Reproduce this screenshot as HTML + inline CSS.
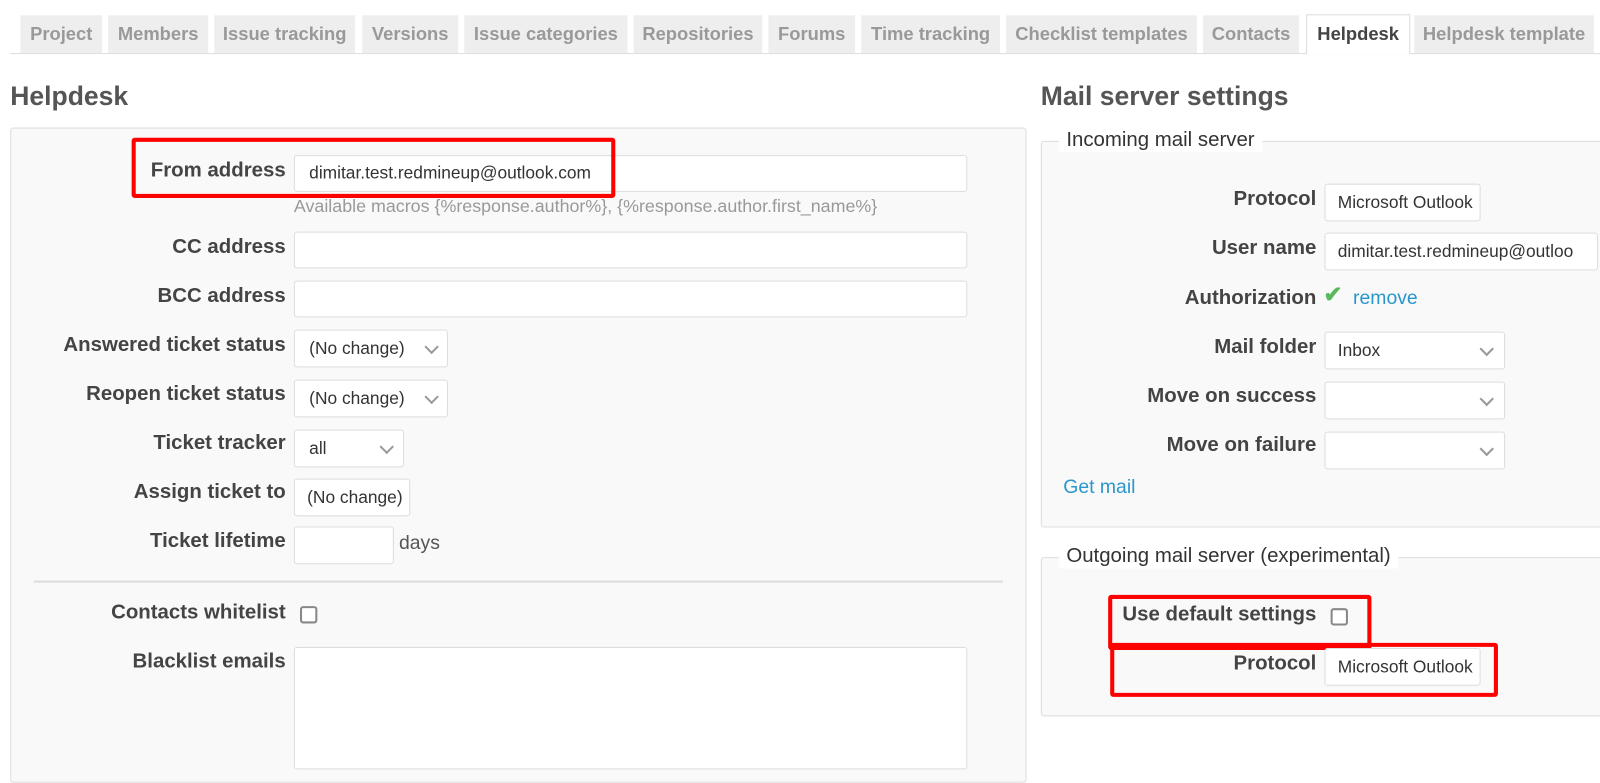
<!DOCTYPE html>
<html><head><style>
body{margin:0;width:1600px;height:745px;background:#fff;font-family:"Liberation Sans",sans-serif;position:relative;overflow:hidden;color:#444}
#w{position:absolute;left:0;top:0;width:1568px;height:730px;transform:scale(1.0204);transform-origin:0 0}
.a{position:absolute}
.tab{position:absolute;top:15px;height:37px;background:#eee;color:#999;font-weight:bold;font-size:18px;line-height:36px;text-align:center;white-space:nowrap}
.lbl{position:absolute;font-weight:bold;font-size:20px;color:#444;text-align:right;white-space:nowrap}
.in{position:absolute;background:#fff;border:1px solid #ddd;border-radius:3px;box-sizing:border-box;font-size:17px;color:#333;padding-left:14px;white-space:nowrap;overflow:hidden}
.chev{position:absolute;width:8px;height:8px;border-right:2px solid #999;border-bottom:2px solid #999;transform:rotate(45deg)}
.red{position:absolute;border:4px solid #f00;border-radius:3px;box-sizing:border-box}
.cb{position:absolute;width:17px;height:17px;border:2px solid #888;border-radius:3px;box-sizing:border-box;background:#fff}
</style></head><body><div id="w">
<div class="a" style="left:10px;top:52px;width:1590px;height:1px;background:#ddd"></div>
<div class="tab" style="left:20px;width:80px">Project</div>
<div class="tab" style="left:106px;width:98px">Members</div>
<div class="tab" style="left:210px;width:138px">Issue tracking</div>
<div class="tab" style="left:355px;width:94px">Versions</div>
<div class="tab" style="left:455px;width:160px">Issue categories</div>
<div class="tab" style="left:621px;width:126px">Repositories</div>
<div class="tab" style="left:753px;width:85px">Forums</div>
<div class="tab" style="left:844px;width:136px">Time tracking</div>
<div class="tab" style="left:986px;width:187px">Checklist templates</div>
<div class="tab" style="left:1179px;width:94px">Contacts</div>
<div class="tab" style="left:1280px;width:100px;background:#fff;color:#444;border:1px solid #ddd;border-bottom:none;height:38px;top:14px">Helpdesk</div>
<div class="tab" style="left:1386px;width:176px">Helpdesk template</div>

<div class="a" style="left:10px;top:79px;font-size:26px;font-weight:bold;color:#555">Helpdesk</div>
<div class="a" style="left:1020px;top:79px;font-size:26px;font-weight:bold;color:#555">Mail server settings</div>

<div class="a" style="left:10px;top:125px;width:994px;height:640px;background:#f9f9f9;border:1px solid #ddd;border-radius:3px"></div>

<div class="lbl" style="right:1288px;top:156px">From address</div>
<div class="in" style="left:288px;top:152px;width:660px;height:36px;line-height:34px">dimitar.test.redmineup@outlook.com</div>
<div class="red" style="left:129px;top:135px;width:474px;height:59px"></div>
<div class="a" style="left:288px;top:192px;font-size:17.5px;color:#999">Available macros {%response.author%}, {%response.author.first_name%}</div>

<div class="lbl" style="right:1288px;top:231px">CC address</div>
<div class="in" style="left:288px;top:227px;width:660px;height:36px"></div>
<div class="lbl" style="right:1288px;top:279px">BCC address</div>
<div class="in" style="left:288px;top:275px;width:660px;height:36px"></div>

<div class="lbl" style="right:1288px;top:327px">Answered ticket status</div>
<div class="in" style="left:288px;top:323px;width:151px;height:37px;line-height:35px">(No change)</div><div class="chev" style="left:418px;top:335px"></div>
<div class="lbl" style="right:1288px;top:375px">Reopen ticket status</div>
<div class="in" style="left:288px;top:372px;width:151px;height:37px;line-height:35px">(No change)</div><div class="chev" style="left:418px;top:384px"></div>
<div class="lbl" style="right:1288px;top:423px">Ticket tracker</div>
<div class="in" style="left:288px;top:421px;width:108px;height:37px;line-height:35px">all</div><div class="chev" style="left:374px;top:433px"></div>
<div class="lbl" style="right:1288px;top:471px">Assign ticket to</div>
<div class="in" style="left:288px;top:469px;width:114px;height:37px;line-height:35px;padding-left:12px">(No change)</div>
<div class="lbl" style="right:1288px;top:519px">Ticket lifetime</div>
<div class="in" style="left:288px;top:516px;width:98px;height:37px"></div>
<div class="a" style="left:391px;top:522px;font-size:19px;color:#555">days</div>

<div class="a" style="left:33px;top:569px;width:950px;height:2px;background:#ddd"></div>
<div class="lbl" style="right:1288px;top:589px">Contacts whitelist</div>
<div class="cb" style="left:294px;top:594px"></div>
<div class="lbl" style="right:1288px;top:637px">Blacklist emails</div>
<div class="in" style="left:288px;top:634px;width:660px;height:120px"></div>

<!-- Right -->
<div class="a" style="left:1020px;top:138px;width:600px;height:377px;background:#f9f9f9;border:1px solid #ddd;border-radius:3px"></div>
<div class="a" style="left:1038px;top:126px;padding:0 7px;background:#fff;font-size:20px;color:#333">Incoming mail server</div>
<div class="lbl" style="right:278px;top:184px">Protocol</div>
<div class="in" style="left:1298px;top:180px;width:153px;height:37px;line-height:35px;padding-left:12px">Microsoft Outlook</div>
<div class="lbl" style="right:278px;top:232px">User name</div>
<div class="in" style="left:1298px;top:228px;width:268px;height:37px;line-height:35px;padding-left:12px">dimitar.test.redmineup@outloo</div>
<div class="lbl" style="right:278px;top:281px">Authorization</div>
<div class="a" style="left:1297px;top:276px;font-size:22px;color:#5cb85c;font-weight:bold">✔</div>
<div class="a" style="left:1326px;top:282px;font-size:19px;color:#2996cc">remove</div>
<div class="lbl" style="right:278px;top:329px">Mail folder</div>
<div class="in" style="left:1298px;top:325px;width:177px;height:37px;line-height:35px;padding-left:12px">Inbox</div><div class="chev" style="left:1452px;top:337px"></div>
<div class="lbl" style="right:278px;top:377px">Move on success</div>
<div class="in" style="left:1298px;top:374px;width:177px;height:37px"></div><div class="chev" style="left:1452px;top:386px"></div>
<div class="lbl" style="right:278px;top:425px">Move on failure</div>
<div class="in" style="left:1298px;top:423px;width:177px;height:37px"></div><div class="chev" style="left:1452px;top:435px"></div>
<div class="a" style="left:1042px;top:467px;font-size:19px;color:#2996cc">Get mail</div>

<div class="a" style="left:1020px;top:546px;width:600px;height:154px;background:#f9f9f9;border:1px solid #ddd;border-radius:3px"></div>
<div class="a" style="left:1038px;top:534px;padding:0 7px;background:#fff;font-size:20px;color:#333">Outgoing mail server (experimental)</div>
<div class="lbl" style="right:278px;top:591px">Use default settings</div>
<div class="cb" style="left:1304px;top:596px"></div>
<div class="red" style="left:1086px;top:583px;width:258px;height:54px"></div>
<div class="lbl" style="right:278px;top:639px">Protocol</div>
<div class="in" style="left:1298px;top:635px;width:153px;height:37px;line-height:35px;padding-left:12px">Microsoft Outlook</div>
<div class="red" style="left:1088px;top:630px;width:380px;height:53px"></div>
</div></body></html>
